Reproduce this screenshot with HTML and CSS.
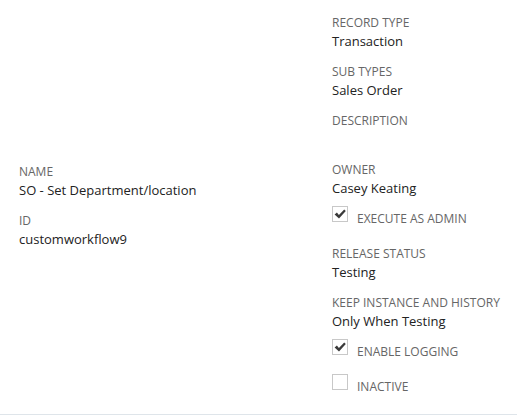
FILE: index.html
```html
<!DOCTYPE html>
<html lang="en">
<head>
  <meta charset="UTF-8" />
  <meta name="viewport" content="width=device-width, initial-scale=1.0"/>
  <title>Workflow - SO - Set Department/location</title>
  <link rel="stylesheet" href="styles.css">
</head>
<body>
  <div class="record">
    <!-- left column: name + id -->
    <div class="col col-left">
      <div class="field">
        <div class="label">NAME</div>
        <div class="value">SO - Set Department/location</div>
      </div>
      <div class="field">
        <div class="label">ID</div>
        <div class="value">customworkflow9</div>
      </div>
    </div>

    <!-- right column -->
    <div class="col col-right">
      <div class="field">
        <div class="label">RECORD TYPE</div>
        <div class="value">Transaction</div>
      </div>
      <div class="field">
        <div class="label">SUB TYPES</div>
        <div class="value">Sales Order</div>
      </div>
      <div class="field">
        <div class="label">DESCRIPTION</div>
        <div class="value"></div>
      </div>
      <div class="field">
        <div class="label">OWNER</div>
        <div class="value">Casey Keating</div>
      </div>
      <div class="check">
        <span class="box checked">
          <svg width="14" height="14" viewBox="0 0 14 14"><path d="M1.6 7.4 L3.9 5.4 L5.9 7.9 L11.2 2.4 L12.8 4.1 L6 11.4 Z" /></svg>
        </span>
        <span class="check-label">EXECUTE AS ADMIN</span>
      </div>
      <div class="field">
        <div class="label">RELEASE STATUS</div>
        <div class="value">Testing</div>
      </div>
      <div class="field">
        <div class="label">KEEP INSTANCE AND HISTORY</div>
        <div class="value">Only When Testing</div>
      </div>
      <div class="check">
        <span class="box checked">
          <svg width="14" height="14" viewBox="0 0 14 14"><path d="M1.6 7.4 L3.9 5.4 L5.9 7.9 L11.2 2.4 L12.8 4.1 L6 11.4 Z" /></svg>
        </span>
        <span class="check-label">ENABLE LOGGING</span>
      </div>
      <div class="check">
        <span class="box"></span>
        <span class="check-label">INACTIVE</span>
      </div>
    </div>
  </div>
</body>
</html>
```

FILE: styles.css
```css
html, body {
  margin: 0;
  padding: 0;
  background: #fff;
  font-family: "Open Sans", "Noto Sans", sans-serif;
}

.record {
  box-sizing: border-box;
  height: 415px;
  display: grid;
  grid-template-columns: 313px 1fr;
  align-items: center;
  padding: 14px 0 18px 19px;
  border-bottom: 1px solid #dfe5ea;
}

.col {
  display: flex;
  flex-direction: column;
}

.col-left {
  margin-top: 2px;
}

.label {
  font-size: 12px;
  line-height: 16px;
  color: #666;
  margin-bottom: 1px;
}

.value {
  font-size: 13px;
  line-height: 18px;
  min-height: 18px;
  color: #222;
}

.field + .field {
  margin-top: 14px;
}

.check {
  display: flex;
  align-items: flex-start;
  gap: 9px;
  height: 22px;
  margin-top: 9px;
}

.check + .check {
  margin-top: 13px;
}

.check + .field {
  margin-top: 18px;
}

.box {
  box-sizing: border-box;
  width: 16px;
  height: 16px;
  border: 1px solid #c8c8c8;
  background: #fff;
  display: flex;
  align-items: center;
  justify-content: center;
}

.box svg path {
  fill: #3a3a3a;
}

.check-label {
  font-size: 12px;
  line-height: 16px;
  padding-top: 5px;
  color: #666;
}
```
